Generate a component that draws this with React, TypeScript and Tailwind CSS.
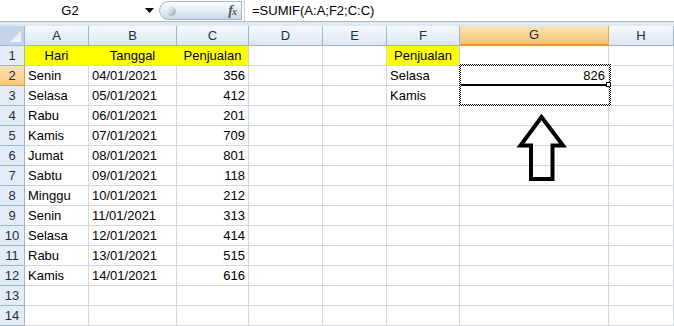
import React from 'react';

const cols = [
  { key: 'A', w: 64 },
  { key: 'B', w: 88 },
  { key: 'C', w: 72 },
  { key: 'D', w: 74 },
  { key: 'E', w: 64 },
  { key: 'F', w: 73 },
  { key: 'G', w: 149 },
  { key: 'H', w: 65 },
];

type Cell = { v: string; align?: 'left' | 'right' | 'center'; fill?: boolean };

const data: Record<number, Record<string, Cell>> = {
  1: {
    A: { v: 'Hari', align: 'center', fill: true },
    B: { v: 'Tanggal', align: 'center', fill: true },
    C: { v: 'Penjualan', align: 'center', fill: true },
    F: { v: 'Penjualan', align: 'center', fill: true },
  },
  2: { A: { v: 'Senin' }, B: { v: '04/01/2021' }, C: { v: '356', align: 'right' }, F: { v: 'Selasa' }, G: { v: '826', align: 'right' } },
  3: { A: { v: 'Selasa' }, B: { v: '05/01/2021' }, C: { v: '412', align: 'right' }, F: { v: 'Kamis' } },
  4: { A: { v: 'Rabu' }, B: { v: '06/01/2021' }, C: { v: '201', align: 'right' } },
  5: { A: { v: 'Kamis' }, B: { v: '07/01/2021' }, C: { v: '709', align: 'right' } },
  6: { A: { v: 'Jumat' }, B: { v: '08/01/2021' }, C: { v: '801', align: 'right' } },
  7: { A: { v: 'Sabtu' }, B: { v: '09/01/2021' }, C: { v: '118', align: 'right' } },
  8: { A: { v: 'Minggu' }, B: { v: '10/01/2021' }, C: { v: '212', align: 'right' } },
  9: { A: { v: 'Senin' }, B: { v: '11/01/2021' }, C: { v: '313', align: 'right' } },
  10: { A: { v: 'Selasa' }, B: { v: '12/01/2021' }, C: { v: '414', align: 'right' } },
  11: { A: { v: 'Rabu' }, B: { v: '13/01/2021' }, C: { v: '515', align: 'right' } },
  12: { A: { v: 'Kamis' }, B: { v: '14/01/2021' }, C: { v: '616', align: 'right' } },
};

const rows = Array.from({ length: 14 }, (_, i) => i + 1);

const Checker = ({ className }: { className: string }) => (
  <div
    className={`absolute bg-[repeating-conic-gradient(#000_0_25%,#fff_0_50%)] bg-[length:2px_2px] ${className}`}
  />
);

const App = () => {
  return (
    <div className="w-[674px] h-[326px] overflow-hidden bg-white font-['Liberation_Sans',Arial,sans-serif] text-[13px] text-black">
      {/* Formula bar */}
      <div className="flex h-[22px] items-center border-b border-[#a7b9cf] bg-white">
        <div className="flex w-[140px] justify-center text-[13px]">G2</div>
        <div className="flex w-[19px] justify-center">
          <svg width="9" height="5" viewBox="0 0 9 5">
            <path d="M0 0h9L4.5 5z" fill="#000" />
          </svg>
        </div>
        <div className="relative flex h-[19px] w-[83px] items-center justify-end rounded-l-full border border-[#a3b5cb] bg-gradient-to-b from-[#fbfcfe] via-[#e6edf6] to-[#c8d5e7] pr-[5px]">
          <div className="absolute left-[6px] top-[4px] h-[10px] w-[10px] rounded-full bg-gradient-to-br from-white via-[#d5dbe3] to-[#8e9aaa]" />
          <span className="font-['Liberation_Serif',serif] text-[14px] font-bold italic text-[#555] tracking-[-1px]">
            f<span className="text-[10px]">x</span>
          </span>
        </div>
        <div className="ml-[2px] h-[21px] w-px bg-[#c6d0dc]" />
        <div className="pl-[7px] text-[13px]">=SUMIF(A:A;F2;C:C)</div>
      </div>
      <div className="h-[4px] bg-[#dfe7f1]" />

      {/* Sheet */}
      <div className="relative">
        <div className="grid grid-cols-[25px_64px_88px_72px_74px_64px_73px_149px_65px] auto-rows-[20px]">
          {/* corner */}
          <div className="relative border-b border-r border-[#9eb6ce] bg-[#c3d3e8]">
            <svg className="absolute bottom-[3px] right-[3px]" width="11" height="11" viewBox="0 0 11 11">
              <path d="M11 0V11H0z" fill="#eef3f9" />
            </svg>
          </div>
          {cols.map((c) =>
            c.key === 'G' ? (
              <div
                key={c.key}
                className="flex items-center justify-center border-b-2 border-r border-b-[#f29536] border-r-[#f2a84a] bg-gradient-to-b from-[#fbe4b8] to-[#f5c56f] text-[13px] text-[#1c2f4a]"
              >
                {c.key}
              </div>
            ) : (
              <div
                key={c.key}
                className="flex items-center justify-center border-b border-r border-[#9eb6ce] bg-gradient-to-b from-[#f6f9fd] to-[#dce6f2] text-[13px] text-[#1c2f4a]"
              >
                {c.key}
              </div>
            )
          )}
          {rows.map((r) => (
            <React.Fragment key={r}>
              {r === 2 ? (
                <div className="flex items-center justify-center border-b border-r border-[#f29536] bg-gradient-to-b from-[#fbe0ae] to-[#f6cb86] text-[13px] text-[#1c2f4a]">
                  {r}
                </div>
              ) : (
                <div className="flex items-center justify-center border-b border-r border-[#9eb6ce] bg-[#e4ecf7] text-[13px] text-[#1c2f4a]">
                  {r}
                </div>
              )}
              {cols.map((c) => {
                const cell = data[r]?.[c.key];
                const align =
                  cell?.align === 'right' ? 'justify-end pr-[3px]' : cell?.align === 'center' ? 'justify-center' : 'justify-start pl-[3px]';
                if (cell?.fill) {
                  const nextFilled = c.key !== 'C' && c.key !== 'F';
                  return (
                    <div
                      key={c.key}
                      className={`flex items-center overflow-hidden whitespace-nowrap border-b border-[#d0d7e5] bg-[#ffff00] ${align} ${
                        nextFilled ? 'border-r border-r-[#ffff00]' : 'border-r border-r-[#d0d7e5]'
                      }`}
                    >
                      {cell.v}
                    </div>
                  );
                }
                return (
                  <div
                    key={c.key}
                    className={`flex items-center overflow-hidden whitespace-nowrap border-b border-r border-[#d0d7e5] ${align}`}
                  >
                    {cell?.v ?? ''}
                  </div>
                );
              })}
            </React.Fragment>
          ))}
        </div>

        {/* copy selection G2:G3 */}
        <Checker className="left-[459px] top-[38px] h-[2px] w-[152px]" />
        <Checker className="left-[459px] top-[78px] h-[2px] w-[152px]" />
        <Checker className="left-[459px] top-[38px] h-[42px] w-[2px]" />
        <Checker className="left-[609px] top-[38px] h-[42px] w-[2px]" />
        <div className="absolute left-[461px] top-[58px] h-[2px] w-[147px] bg-black" />
        <div className="absolute left-[606px] top-[56px] h-[5px] w-[5px] border border-black bg-white" />

        {/* arrow */}
        <svg className="absolute left-0 top-[-26px]" width="674" height="326" viewBox="0 0 674 326">
          <polygon
            points="541.5,117 563,145.5 552.5,145.5 552.5,179 531,179 531,145.5 520.5,145.5"
            fill="none"
            stroke="#000"
            strokeWidth="4"
            strokeLinejoin="miter"
          />
        </svg>
      </div>
    </div>
  );
};

export default App;
